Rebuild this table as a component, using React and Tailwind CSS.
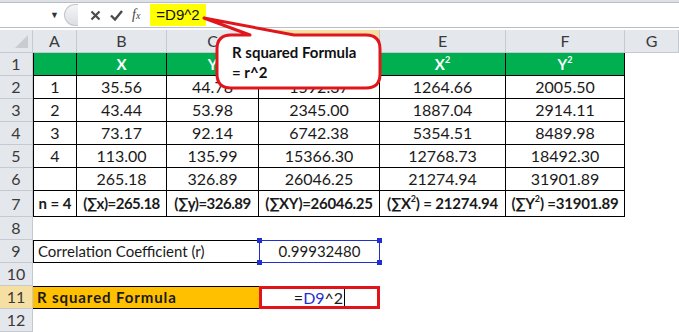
import React from 'react';

const rows = [
    ['1', '35.56', '44.78', '1592.37', '1264.66', '2005.50'],
    ['2', '43.44', '53.98', '2345.00', '1887.04', '2914.11'],
    ['3', '73.17', '92.14', '6742.38', '5354.51', '8489.98'],
    ['4', '113.00', '135.99', '15366.30', '12768.73', '18492.30'],
    ['', '265.18', '326.89', '26046.25', '21274.94', '31901.89'],
];

function RowHead({ n, active }) {
    return (
        <div className={`flex items-center justify-center border-r border-b border-[#c5c9d0] text-[16px] text-[#3a3a3a] ${active ? 'bg-[#f6dfa3]' : 'bg-[#e4e7ec]'}`}>
            {n}
        </div>
    );
}

function Blank() {
    return <div className="col-span-7" />;
}

export default function App() {
    return (
        <div className="relative w-[679px] h-[332px] overflow-hidden bg-white font-['Lato','Open_Sans',sans-serif] text-[#1a1a1a]">
            {/* formula bar */}
            <div className="h-[3px] bg-[#dde1e6] border-b border-[#b9bec6]" />
            <div className="flex h-[25px] items-center border-b border-[#b9bec6] bg-white">
                <div className="flex w-[64px] h-full items-center justify-end pr-[5px]">
                    <span className="text-[9px] text-[#333]">▼</span>
                </div>
                <div className="h-[22px] w-[14px] rounded-l-full border border-r-0 border-[#c3c7cd] bg-gradient-to-b from-[#f4f5f7] to-[#dcdfe3]" />
                <div className="flex items-center gap-[9px] pl-[12px] pr-[8px] text-[#444]">
                    <svg width="11" height="11" viewBox="0 0 11 11"><path d="M1.5 1.5 L9.5 9.5 M9.5 1.5 L1.5 9.5" stroke="#4a4a4a" strokeWidth="2.2" /></svg>
                    <svg width="13" height="11" viewBox="0 0 13 11"><path d="M1 5.5 L5 9.5 L12 1" fill="none" stroke="#4a4a4a" strokeWidth="2.4" /></svg>
                    <span className="font-['Liberation_Serif',serif] italic text-[14px] leading-none text-[#444]">f<span className="text-[10px]">x</span></span>
                </div>
                <div className="flex h-[22px] w-[56px] ml-[2px] items-center bg-[#ffff00] pl-[6px] text-[15px] font-['Liberation_Sans',sans-serif] text-[#111]">
                    =D9^2
                </div>
            </div>
            <div className="h-[2px] bg-white" />

            {/* sheet grid */}
            <div className="grid grid-cols-[33px_44px_90px_92px_121px_126px_119px_1fr] grid-rows-[23px_23px_23px_23px_23px_23px_23px_26px_23px_23px_23px_23px_23px] text-[15px]">
                {/* column headers */}
                <div className="relative bg-[#e4e7ec] border-r border-b border-[#c5c9d0]">
                    <div className="absolute right-[4px] bottom-[4px] h-0 w-0 border-l-[13px] border-l-transparent border-b-[13px] border-b-[#c9ccd1]" />
                </div>
                {['A', 'B', 'C', 'D', 'E', 'F', 'G'].map((c) => (
                    <div key={c} className={`flex items-center justify-center border-r border-b border-[#c5c9d0] text-[16px] text-[#3a3a3a] ${c === 'D' ? 'bg-[#f6dfa3]' : 'bg-[#e4e7ec]'}`}>
                        {c}
                    </div>
                ))}

                {/* row 1 */}
                <RowHead n="1" />
                <div className="bg-[#00b050] border-r border-b border-l border-black" />
                <div className="flex items-center justify-center bg-[#00b050] border-r border-b border-black font-bold text-white">X</div>
                <div className="flex items-center justify-center bg-[#00b050] border-r border-b border-black font-bold text-white">Y</div>
                <div className="flex items-center justify-center bg-[#00b050] border-r border-b border-black font-bold text-white">XY</div>
                <div className="flex items-center justify-center bg-[#00b050] border-r border-b border-black font-bold text-white">X<sup className="text-[9px]">2</sup></div>
                <div className="flex items-center justify-center bg-[#00b050] border-r border-b border-black font-bold text-white">Y<sup className="text-[9px]">2</sup></div>
                <div />

                {/* rows 2-6 */}
                {rows.map((r, i) => (
                    <React.Fragment key={i}>
                        <RowHead n={String(i + 2)} />
                        {r.map((v, j) => (
                            <div key={j} className={`flex items-center justify-center border-r border-b border-black whitespace-nowrap text-[16px] ${j === 0 ? 'border-l' : ''}`}>
                                {v}
                            </div>
                        ))}
                        <div />
                    </React.Fragment>
                ))}

                {/* row 7 */}
                <RowHead n="7" />
                <div className="flex items-center justify-center border-r border-b border-l border-black font-bold whitespace-nowrap">n = 4</div>
                <div className="flex items-center justify-center border-r border-b border-black font-bold whitespace-nowrap overflow-hidden text-[15px] tracking-[-0.5px]">(∑x)=265.18</div>
                <div className="flex items-center justify-center border-r border-b border-black font-bold whitespace-nowrap overflow-hidden text-[15px] tracking-[-0.5px]">(∑y)=326.89</div>
                <div className="flex items-center justify-center border-r border-b border-black font-bold whitespace-nowrap overflow-hidden text-[15px] tracking-[-0.3px]">(∑XY)=26046.25</div>
                <div className="flex items-center justify-center border-r border-b border-black font-bold whitespace-nowrap overflow-hidden text-[15px] tracking-[-0.2px]">(∑X<sup className="text-[9px]">2</sup>) = 21274.94</div>
                <div className="flex items-center justify-center border-r border-b border-black font-bold whitespace-nowrap overflow-hidden text-[15px] tracking-[-0.2px]">(∑Y<sup className="text-[9px]">2</sup>) =31901.89</div>
                <div />

                {/* row 8 */}
                <RowHead n="8" />
                <Blank />

                {/* row 9 */}
                <RowHead n="9" />
                <div className="col-span-3 flex items-center border-t border-b border-l border-black pl-[4px] whitespace-nowrap">Correlation Coefficient (r)</div>
                <div className="relative flex items-center justify-center border border-[#1f2fd0]">
                    0.99932480
                    <span className="absolute -left-[3px] -top-[3px] h-[5px] w-[5px] bg-[#1f2fd0]" />
                    <span className="absolute -left-[3px] -bottom-[3px] h-[5px] w-[5px] bg-[#1f2fd0]" />
                    <span className="absolute -right-[3px] -top-[3px] h-[5px] w-[5px] bg-[#1f2fd0]" />
                    <span className="absolute -right-[3px] -bottom-[3px] h-[5px] w-[5px] bg-[#1f2fd0]" />
                </div>
                <div />
                <div />
                <div />

                {/* row 10 */}
                <RowHead n="10" />
                <Blank />

                {/* row 11 */}
                <RowHead n="11" active />
                <div className="col-span-3 flex items-center bg-[#ffc000] border-t border-b border-black pl-[4px] font-bold whitespace-nowrap tracking-[0.9px]">R squared Formula</div>
                <div className="flex items-center justify-center border-[3px] border-[#e1141c] text-[16px]">
                    <span>=</span><span className="text-[#1f2fd0]">D9</span><span>^2</span>
                    <span className="ml-[1px] h-[17px] w-px bg-black" />
                </div>
                <div />
                <div />
                <div />

                {/* row 12 */}
                <RowHead n="12" />
                <Blank />
            </div>

            {/* callout */}
            <svg className="absolute left-0 top-0" width="679" height="100" viewBox="0 0 679 100">
                <path
                    d="M231 35 L250 35 L204 18 L294 35 L366 35 Q380 35 380 49 L380 74 Q380 88 366 88 L231 88 Q217 88 217 74 L217 49 Q217 35 231 35 Z"
                    fill="white"
                    stroke="#e0161d"
                    strokeWidth="3"
                    strokeLinejoin="round"
                />
            </svg>
            <div className="absolute left-[232px] top-[42px] text-[15px] font-bold leading-[20px] text-[#111] whitespace-nowrap">
                <div>R squared Formula</div>
                <div>= r^2</div>
            </div>
        </div>
    );
}
